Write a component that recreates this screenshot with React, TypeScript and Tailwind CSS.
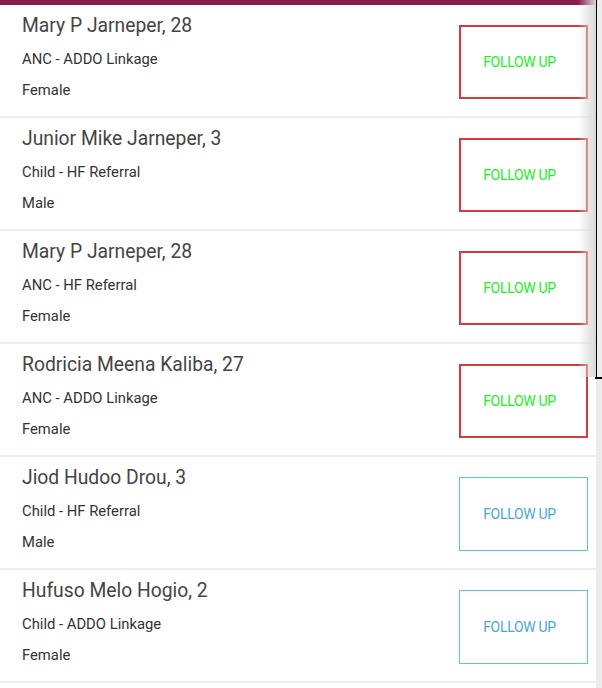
import React from 'react'

type Visit = { name: string; kind: string; gender: string; done: boolean }

const visits: Visit[] = [
  { name: 'Mary P Jarneper, 28', kind: 'ANC - ADDO Linkage', gender: 'Female', done: false },
  { name: 'Junior Mike Jarneper, 3', kind: 'Child - HF Referral', gender: 'Male', done: false },
  { name: 'Mary P Jarneper, 28', kind: 'ANC - HF Referral', gender: 'Female', done: false },
  { name: 'Rodricia Meena Kaliba, 27', kind: 'ANC - ADDO Linkage', gender: 'Female', done: false },
  { name: 'Jiod Hudoo Drou, 3', kind: 'Child - HF Referral', gender: 'Male', done: true },
  { name: 'Hufuso Melo Hogio, 2', kind: 'Child - ADDO Linkage', gender: 'Female', done: true },
]

function Row({ v }: { v: Visit }) {
  return (
    <div className="flex items-center h-[113px] border-b-2 border-[#eeeeee] pl-[22px] pr-2">
      <div className="flex-1 self-start flex flex-col pt-[9px]">
        <div className="text-[19.3px] leading-6 text-[#444444]">{v.name}</div>
        <div className="text-[14.8px] leading-5 text-[#333333] mt-[11px]">{v.kind}</div>
        <div className="text-[14.8px] leading-5 text-[#333333] mt-[11px]">{v.gender}</div>
      </div>
      <button
        className={
          'w-[129px] h-[74px] mt-[3px] pr-2 flex items-center justify-center text-[14px] tracking-[-0.3px] bg-white ' +
          (v.done
            ? 'border border-[#5cc4e8] text-[#4aa8d4]'
            : 'border-2 border-[#d13d3f] text-[#22f022]')
        }
      >
        FOLLOW UP
      </button>
    </div>
  )
}

export default function App() {
  return (
    <div className="relative flex w-[602px] h-[688px] overflow-hidden bg-white font-['Roboto',sans-serif]">
      <div className="w-[596px] flex flex-col">
        <div className="h-[5px] bg-[#8b1a4e]" />
        {visits.map((v, i) => (
          <Row key={i} v={v} />
        ))}
      </div>
      <div className="w-[6px] bg-[#ececec]" />
      {/* overlay edge at the right */}
      <div className="absolute right-0 top-0 w-[7px] h-[379px] bg-[#ededed] border-l-2 border-b-2 border-black" />
      <div className="absolute left-[578px] top-0 w-[18px] h-[377px] bg-gradient-to-r from-transparent to-[#d9d9d9]" />
    </div>
  )
}
